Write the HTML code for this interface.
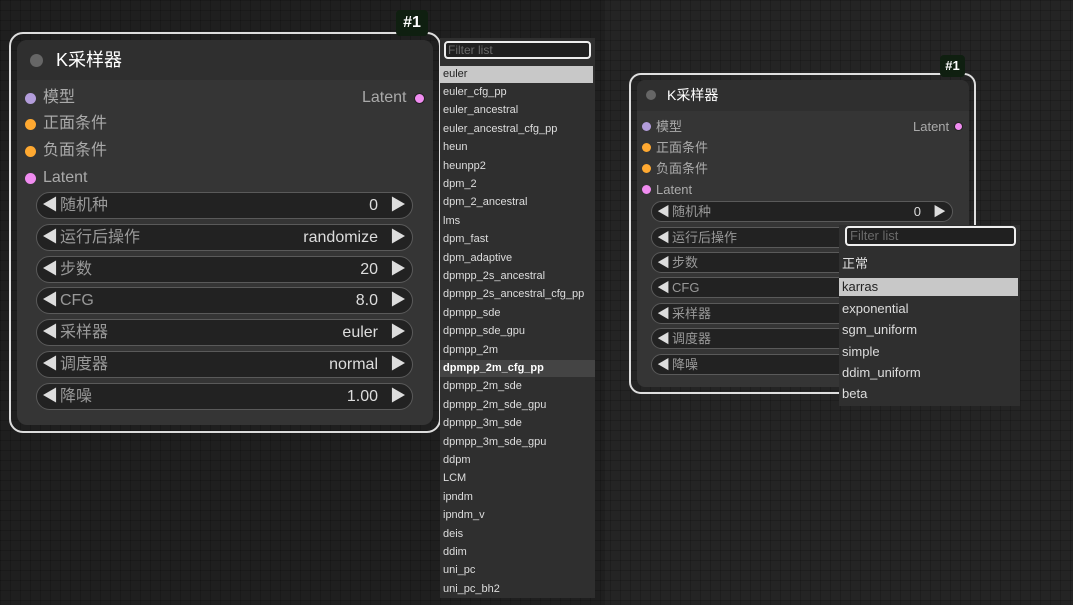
<!DOCTYPE html>
<html><head><meta charset="utf-8"><style>
*{margin:0;padding:0;box-sizing:border-box}
body{width:1073px;height:605px;overflow:hidden;position:relative;font-family:"Liberation Sans","Noto Sans CJK SC",sans-serif;
background-color:#242424;
background-image:linear-gradient(rgba(0,0,0,.16) 1px,transparent 1px),linear-gradient(90deg,rgba(0,0,0,.16) 1px,transparent 1px);
background-size:10px 10px}
.a{position:absolute}
.sel{border:2px solid #ddd;border-radius:14px}
.node{background:#353535;border-radius:10px;overflow:hidden}
.title{background:#2f2f2f;color:#fff}
.badge{background:#0f1f10;color:#fff;font-weight:bold;text-align:center;border-radius:4px}
.dot{position:absolute;border-radius:50%}
.lbl{position:absolute;color:#aaa;white-space:nowrap}
.w{position:absolute;background:#222;border:1px solid #5a5a5a;color:#999;white-space:nowrap}
.w span{position:absolute;top:0}
.w .l{left:5px;color:#ddd}
.w .v{color:#ddd}
.w .r{right:6px;color:#ddd}
.dd{background:#2f2f2f}
.dd div{position:absolute;left:0;right:0;color:#ddd;white-space:nowrap}
.dd div.flt{position:absolute;border:2px solid #eee;border-radius:4px;background:#202020;color:#6a6a6a}
</style></head><body>
<div class="a" style="left:0;top:0;width:605px;height:605px;background:rgba(0,0,0,0.12)"></div>

<!-- left node -->
<div class="a sel" style="left:9px;top:32px;width:432px;height:401px"></div>
<div class="a node" style="left:17px;top:40px;width:416px;height:385px">
 <div class="title" style="height:40px"></div>
</div>
<div class="dot" style="left:30px;top:54px;width:13px;height:13px;background:#666"></div>
<div class="lbl" style="left:56px;top:51px;font-size:18px;line-height:18px;color:#fff">K采样器</div>
<div class="a badge" style="left:396px;top:10px;width:32px;height:26px;font-size:16px;line-height:26px">#1</div>
<div class="dot" style="left:25px;top:93px;width:11px;height:11px;background:#b39ddb"></div>
<div class="lbl" style="left:43px;top:90px;font-size:16px;line-height:16px">模型</div>
<div class="lbl" style="left:362px;top:90px;font-size:16px;line-height:16px">Latent</div>
<div class="dot" style="left:414px;top:93px;width:11px;height:11px;background:#f08cf0;border:1px solid #222"></div>
<div class="dot" style="left:25px;top:119px;width:11px;height:11px;background:#ffa931"></div>
<div class="lbl" style="left:43px;top:116px;font-size:16px;line-height:16px">正面条件</div>
<div class="dot" style="left:25px;top:146px;width:11px;height:11px;background:#ffa931"></div>
<div class="lbl" style="left:43px;top:143px;font-size:16px;line-height:16px">负面条件</div>
<div class="dot" style="left:25px;top:173px;width:11px;height:11px;background:#f08cf0"></div>
<div class="lbl" style="left:43px;top:170px;font-size:16px;line-height:16px">Latent</div>

<div id="lw"></div>

<!-- left dropdown -->
<div class="a dd" style="left:440px;top:38px;width:155px;height:560px" id="ld"></div>

<!-- right node -->
<div class="a sel" style="left:629px;top:73px;width:347px;height:321px;border-radius:12px"></div>
<div class="a node" style="left:637px;top:80px;width:332px;height:307px;border-radius:8px">
 <div class="title" style="height:31px"></div>
</div>
<div class="dot" style="left:646px;top:90px;width:10px;height:10px;background:#666"></div>
<div class="lbl" style="left:667px;top:88px;font-size:14px;line-height:14px;color:#fff">K采样器</div>
<div class="a badge" style="left:940px;top:55px;width:25px;height:22px;font-size:13px;line-height:22px">#1</div>
<div class="dot" style="left:642px;top:122px;width:9px;height:9px;background:#b39ddb"></div>
<div class="lbl" style="left:656px;top:120px;font-size:13px;line-height:13px">模型</div>
<div class="lbl" style="left:913px;top:120px;font-size:13px;line-height:13px">Latent</div>
<div class="dot" style="left:954px;top:122px;width:9px;height:9px;background:#f08cf0;border:1px solid #222"></div>
<div class="dot" style="left:642px;top:143px;width:9px;height:9px;background:#ffa931"></div>
<div class="lbl" style="left:656px;top:141px;font-size:13px;line-height:13px">正面条件</div>
<div class="dot" style="left:642px;top:164px;width:9px;height:9px;background:#ffa931"></div>
<div class="lbl" style="left:656px;top:162px;font-size:13px;line-height:13px">负面条件</div>
<div class="dot" style="left:642px;top:185px;width:9px;height:9px;background:#f08cf0"></div>
<div class="lbl" style="left:656px;top:183px;font-size:13px;line-height:13px">Latent</div>
<div id="rw"></div>

<!-- right dropdown -->
<div class="a dd" style="left:839px;top:225px;width:181px;height:181px;font-size:13px;line-height:16px">
 <div class="flt" style="left:6px;top:1px;width:171px;height:20px;font-size:13px;line-height:16px;padding-left:3px;right:auto">Filter list</div>
 <div style="top:31px;padding-left:3px">正常</div>
 <div style="top:53px;height:18px;background:#c8c8c8;color:#222;padding-left:3px;right:2px;line-height:18px">karras</div>
 <div style="top:76px;padding-left:3px">exponential</div>
 <div style="top:97px;padding-left:3px">sgm_uniform</div>
 <div style="top:119px;padding-left:3px">simple</div>
 <div style="top:140px;padding-left:3px">ddim_uniform</div>
 <div style="top:161px;padding-left:3px">beta</div>
</div>

<script>
function widgets(el,x,w,h,centers,fs,items){
 let s='';
 centers.forEach((c,i)=>{
  s+=`<div class="w" style="left:${x}px;top:${c-h/2}px;width:${w}px;height:${h}px;border-radius:${h/2}px;font-size:${fs}px;line-height:${h-2}px">
  <span class="l">◀</span><span style="left:${fs+7}px">${items[i][0]}</span><span class="v" style="right:${fs+18}px">${items[i][1]}</span><span class="r">▶</span></div>`;
 });
 document.getElementById(el).innerHTML=s;
}
const it=[["随机种","0"],["运行后操作","randomize"],["步数","20"],["CFG","8.0"],["采样器","euler"],["调度器","normal"],["降噪","1.00"]];
widgets('lw',36,377,27,[205,237,269,300,332,364,396],16,it);
widgets('rw',651,302,21,[211,237,262,287,313,338,364],13,it.map((a,i)=>i==0?a:[a[0],""]));
const names="euler euler_cfg_pp euler_ancestral euler_ancestral_cfg_pp heun heunpp2 dpm_2 dpm_2_ancestral lms dpm_fast dpm_adaptive dpmpp_2s_ancestral dpmpp_2s_ancestral_cfg_pp dpmpp_sde dpmpp_sde_gpu dpmpp_2m dpmpp_2m_cfg_pp dpmpp_2m_sde dpmpp_2m_sde_gpu dpmpp_3m_sde dpmpp_3m_sde_gpu ddpm LCM ipndm ipndm_v deis ddim uni_pc uni_pc_bh2".split(" ");
let s='<div class="flt" style="left:4px;top:3px;width:147px;height:18px;font-size:12px;line-height:14px;padding-left:2px;right:auto">Filter list</div>';
names.forEach((n,i)=>{
 let top=27.5+i*18.4;
 let st=`top:${top}px;height:17px;line-height:17px;font-size:11px;padding-left:3px;`;
 if(i==0)st+='background:#c8c8c8;color:#222;right:2px;';
 if(i==16)st+='background:#444;color:#fff;font-weight:bold;';
 s+=`<div style="${st}">${n}</div>`;
});
document.getElementById('ld').innerHTML=s;
</script>
</body></html>
